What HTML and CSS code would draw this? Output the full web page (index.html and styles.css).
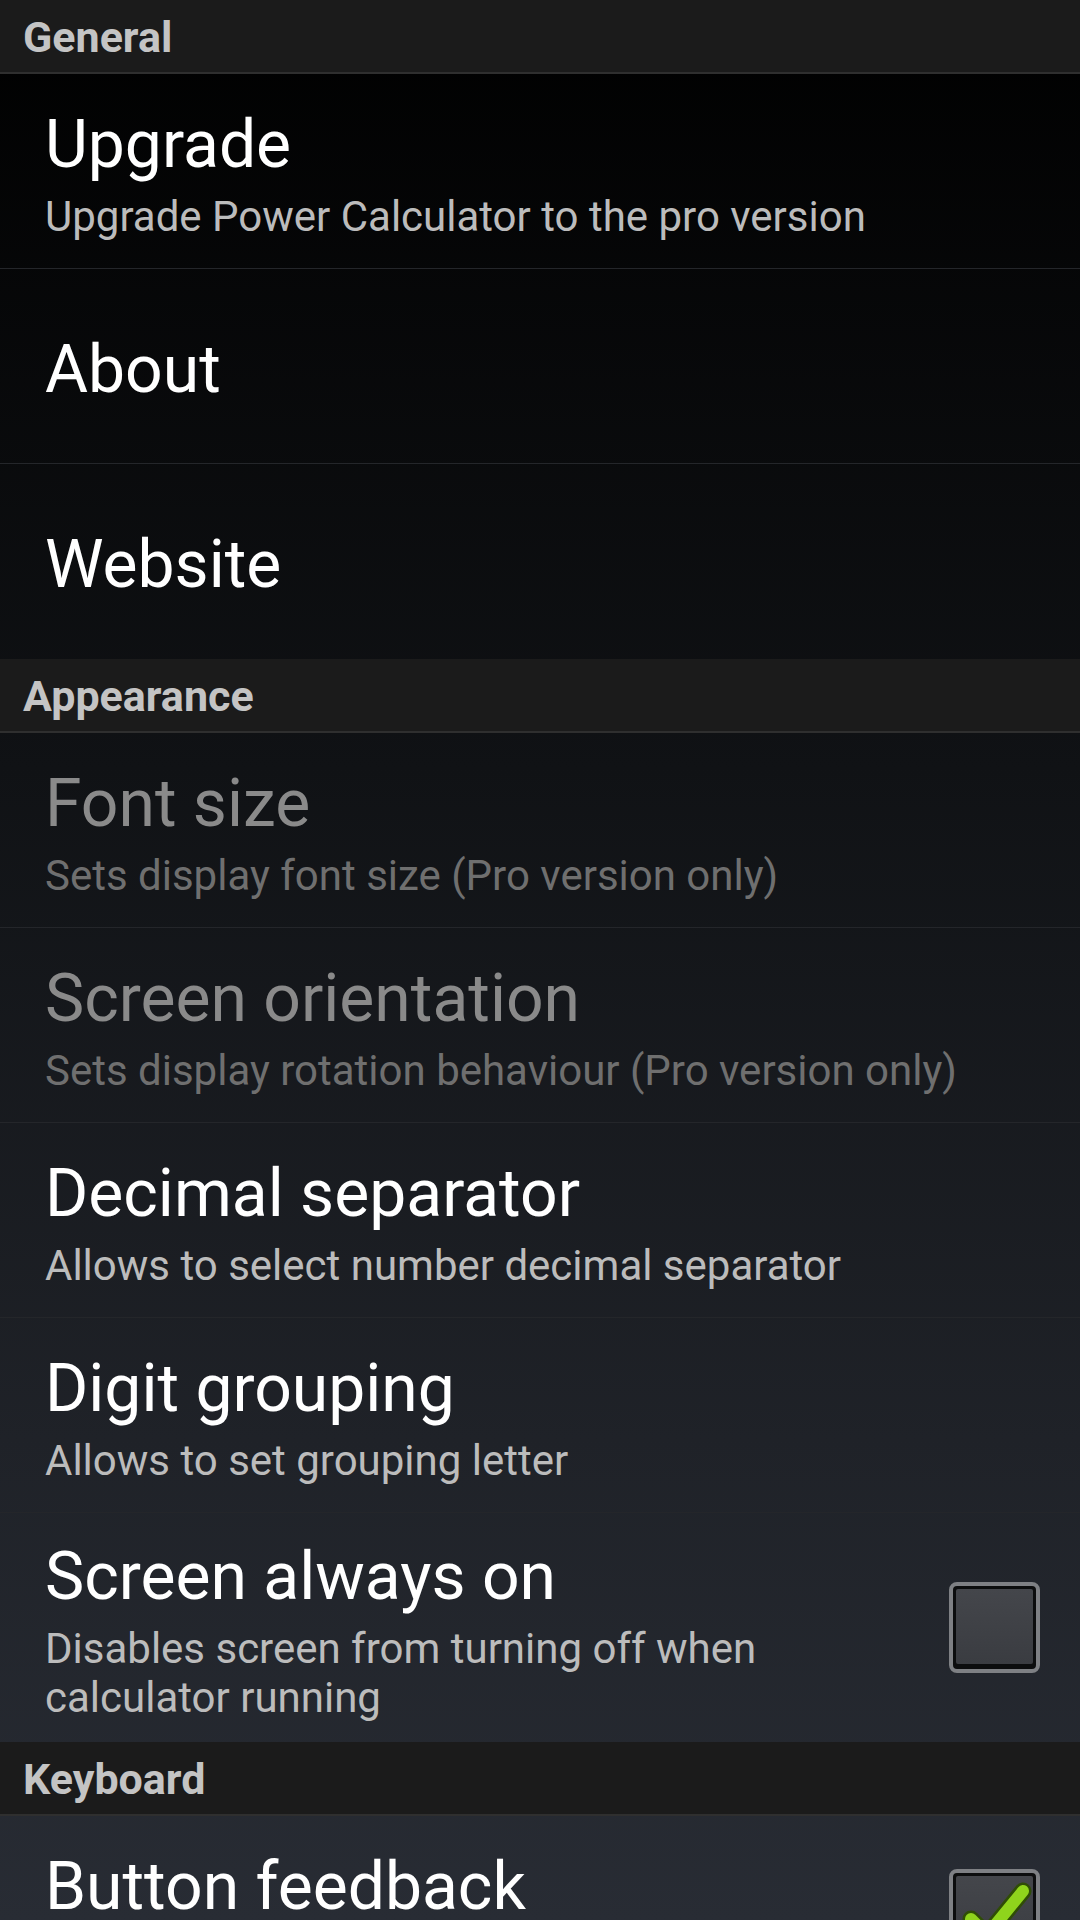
FILE: index.html
```html
<!DOCTYPE html>
<html lang="en">
<head>
<meta charset="utf-8">
<title>Settings</title>
<link rel="stylesheet" href="styles.css">
</head>
<body>
<div class="screen">
  <div class="category">General</div>
  <div class="pref">
    <div class="text">
      <div class="title">Upgrade</div>
      <div class="summary">Upgrade Power Calculator to the pro version</div>
    </div>
  </div>
  <div class="pref single">
    <div class="text"><div class="title">About</div></div>
  </div>
  <div class="pref single last">
    <div class="text"><div class="title">Website</div></div>
  </div>

  <div class="category">Appearance</div>
  <div class="pref disabled">
    <div class="text">
      <div class="title">Font size</div>
      <div class="summary">Sets display font size (Pro version only)</div>
    </div>
  </div>
  <div class="pref disabled">
    <div class="text">
      <div class="title">Screen orientation</div>
      <div class="summary">Sets display rotation behaviour (Pro version only)</div>
    </div>
  </div>
  <div class="pref">
    <div class="text">
      <div class="title">Decimal separator</div>
      <div class="summary">Allows to select number decimal separator</div>
    </div>
  </div>
  <div class="pref">
    <div class="text">
      <div class="title">Digit grouping</div>
      <div class="summary">Allows to set grouping letter</div>
    </div>
  </div>
  <div class="pref tall last">
    <div class="text">
      <div class="title">Screen always on</div>
      <div class="summary">Disables screen from turning off when<br>calculator running</div>
    </div>
    <div class="checkbox"><span class="fill"></span></div>
  </div>

  <div class="category">Keyboard</div>
  <div class="pref last">
    <div class="text">
      <div class="title">Button feedback</div>
    </div>
    <div class="checkbox checked">
      <span class="fill"></span>
      <svg class="check" viewBox="0 0 90 90" width="90" height="90">
        <path d="M22 50 L38 66 L74 22" fill="none" stroke="#2f4d06" stroke-width="17" stroke-linecap="round" stroke-linejoin="round"/>
        <path d="M22 50 L38 66 L74 22" fill="none" stroke="#8fd41c" stroke-width="12" stroke-linecap="round" stroke-linejoin="round"/>
      </svg>
    </div>
  </div>
</div>
</body>
</html>
```
FILE: styles.css
```css
html, body {
  margin: 0;
  padding: 0;
}
body {
  width: 1080px;
  height: 1920px;
  overflow: hidden;
  background: linear-gradient(to bottom, #000000 0%, #101215 40%, #1f2228 75%, #282c34 100%);
  font-family: Roboto, "Noto Sans", "Liberation Sans", sans-serif;
}
.screen {
  display: flex;
  flex-direction: column;
}
.category {
  height: 70px;
  line-height: 70px;
  padding: 2px 0 0 23px;
  background: #1b1b1b;
  border-bottom: 2px solid #2f2f2f;
  color: #c4c4c4;
  font-weight: 700;
  font-size: 43px;
}
.pref {
  display: flex;
  align-items: flex-start;
  box-sizing: border-box;
  min-height: 195px;
  padding: 33px 40px 20px 45px;
  border-bottom: 1px solid #24262a;
}
.pref.last {
  border-bottom: none;
}
.pref.single {
  align-items: center;
  padding-top: 7px;
  padding-bottom: 0;
}
.pref.tall {
  min-height: 229px;
  padding-top: 26px;
  align-items: center;
}
.text {
  flex: 1;
  min-width: 0;
}
.title {
  font-size: 66px;
  line-height: 76px;
  color: #ffffff;
}
.summary {
  margin-top: 9px;
  font-size: 42px;
  line-height: 49px;
  color: #bcbcbc;
}
.disabled .title {
  color: #8a8a8a;
}
.disabled .summary {
  color: #6f6f6f;
}
.checkbox {
  position: relative;
  flex: none;
  box-sizing: border-box;
  width: 91px;
  height: 91px;
  margin-left: 20px;
  border: 4px solid #7e8084;
  border-radius: 8px;
  background: #0c0d0e;
  padding: 3px 3px 5px 3px;
}
.pref.tall .checkbox {
  margin-bottom: 7px;
}
.pref.last .checkbox.checked {
  margin-top: 20px;
}
.fill {
  display: block;
  width: 100%;
  height: 100%;
  border-radius: 2px;
  background: linear-gradient(to bottom, #44464b, #3a3c41);
}
.check {
  position: absolute;
  left: -4px;
  top: -4px;
}
```
